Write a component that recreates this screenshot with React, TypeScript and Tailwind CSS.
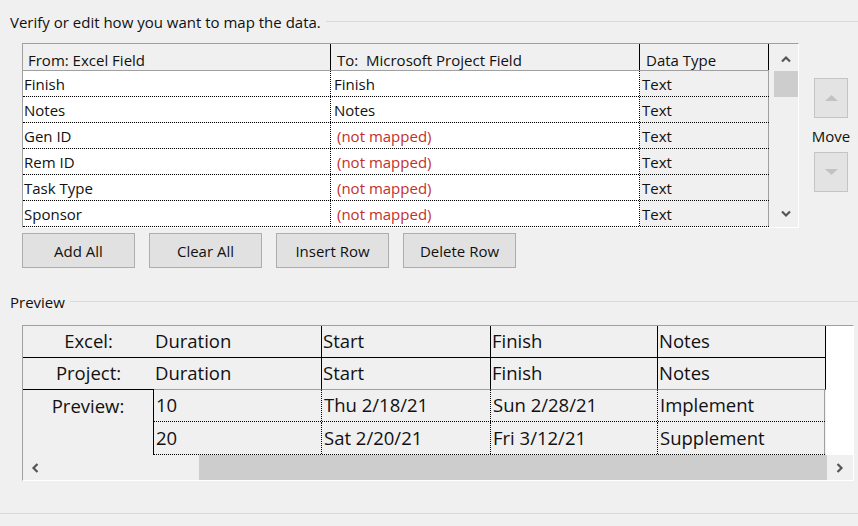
const mapRows = [
  { from: "Finish", to: "Finish" },
  { from: "Notes", to: "Notes" },
  { from: "Gen ID", to: null },
  { from: "Rem ID", to: null },
  { from: "Task Type", to: null },
  { from: "Sponsor", to: null },
];

const previewRows = [
  ["10", "Thu 2/18/21", "Sun 2/28/21", "Implement"],
  ["20", "Sat 2/20/21", "Fri 3/12/21", "Supplement"],
];

const Chevron = ({ dir }: { dir: "up" | "down" | "left" | "right" }) => {
  const pts = {
    up: "1,6.5 5,2.5 9,6.5",
    down: "1,1.5 5,5.5 9,1.5",
    left: "6.5,1 2.5,5 6.5,9",
    right: "1.5,1 5.5,5 1.5,9",
  }[dir];
  const vertical = dir === "up" || dir === "down";
  return (
    <svg
      width={vertical ? 10 : 8}
      height={vertical ? 8 : 10}
      viewBox={vertical ? "0 0 10 8" : "0 0 8 10"}
    >
      <polyline points={pts} fill="none" stroke="#555555" strokeWidth="2.2" />
    </svg>
  );
};

const Triangle = ({ up }: { up?: boolean }) => (
  <svg width="13" height="6" viewBox="0 0 13 6">
    <polygon points={up ? "0,6 6.5,0 13,6" : "0,0 6.5,6 13,0"} fill="#c2c2c2" />
  </svg>
);

const MappingTable = () => (
  <div className="flex w-[777px] h-[185px] border-l border-t border-[#a0a0a0] border-r border-b border-r-white border-b-white">
    <div className="flex flex-col w-[746px]">
      {/* header */}
      <div className="flex h-[27px] border-b border-[#a0a0a0] bg-[#f0f0f0]">
        <div className="w-[308px] border-r border-black pl-[5px] pt-[6px] flex items-center">From: Excel Field</div>
        <div className="w-[309px] border-r border-black pl-[6px] pt-[6px] flex items-center whitespace-pre">To:  Microsoft Project Field</div>
        <div className="w-[129px] border-r border-black pl-[6px] pt-[6px] flex items-center">Data Type</div>
      </div>
      {mapRows.map((r) => (
        <div key={r.from} className="flex h-[26px] border-b border-dotted border-black">
          <div className="w-[308px] bg-white border-r border-dotted border-black pl-[1px] pt-[2px] flex items-center">{r.from}</div>
          <div className="w-[309px] bg-white border-r border-dotted border-black pl-[3px] pt-[2px] flex items-center">
            {r.to ? r.to : <span className="text-[#c4302b] pl-[3px]">(not mapped)</span>}
          </div>
          <div className="w-[129px] bg-[#f0f0f0] border-r border-[#a0a0a0] pl-[2px] pt-[2px] flex items-center">Text</div>
        </div>
      ))}
    </div>
    {/* vertical scrollbar */}
    <div className="flex flex-col w-[29px] bg-[#f0f0f0]">
      <div className="h-[27px] flex items-center justify-center pl-[4px] pt-[2px]">
        <Chevron dir="up" />
      </div>
      <div className="h-[26px] ml-[5px] bg-[#cdcdcd]" />
      <div className="flex-1" />
      <div className="h-[26px] flex items-center justify-center pl-[4px]">
        <Chevron dir="down" />
      </div>
    </div>
  </div>
);

const MoveButtons = () => (
  <div className="flex flex-col ml-[15px] pt-[35px] w-[34px]">
    <div className="h-[40px] bg-[#e3e3e3] border border-[#c4c4c4] flex items-center justify-center">
      <Triangle up />
    </div>
    <div className="h-[34px] pt-[2px] flex items-center justify-center whitespace-nowrap">Move</div>
    <div className="h-[40px] bg-[#e3e3e3] border border-[#c4c4c4] flex items-center justify-center">
      <Triangle />
    </div>
  </div>
);

const PreviewTable = () => (
  <div className="flex flex-col ml-[22px] w-[832px] h-[156px] border-l border-t border-[#a0a0a0] border-r border-b border-r-white border-b-white bg-[#f0f0f0]">
    <div className="flex">
      <div className="flex flex-col w-[803px] text-[18.5px]">
        <div className="flex h-[32px] border-b border-black">
          <div className="w-[131px] flex items-center justify-center">Excel:</div>
          <div className="w-[168px] border-r border-black pl-[1px] flex items-center">Duration</div>
          <div className="w-[169px] border-r border-black pl-[1px] flex items-center">Start</div>
          <div className="w-[167px] border-r border-black pl-[1px] flex items-center">Finish</div>
          <div className="w-[168px] border-r border-black pl-[1px] flex items-center">Notes</div>
        </div>
        <div className="flex h-[32px]">
          <div className="w-[131px] border-b border-black flex items-center justify-center">Project:</div>
          <div className="w-[168px] border-r border-b border-r-black border-b-[#a0a0a0] pl-[1px] flex items-center">Duration</div>
          <div className="w-[169px] border-r border-b border-r-black border-b-[#a0a0a0] pl-[1px] flex items-center">Start</div>
          <div className="w-[167px] border-r border-b border-r-black border-b-[#a0a0a0] pl-[1px] flex items-center">Finish</div>
          <div className="w-[168px] border-r border-b border-r-black border-b-[#a0a0a0] pl-[1px] flex items-center">Notes</div>
        </div>
        <div className="flex h-[65px]">
          <div className="w-[131px] border-r border-black">
            <div className="h-[32px] flex items-center justify-center">Preview:</div>
          </div>
          <div className="flex flex-col">
            {previewRows.map((row, i) => (
              <div key={i} className={`flex border-b border-dotted border-black ${i === 0 ? "h-[32px]" : "h-[33px]"}`}>
                <div className="w-[168px] border-r border-dotted border-black pl-[2px] flex items-center">{row[0]}</div>
                <div className="w-[169px] border-r border-dotted border-black pl-[2px] flex items-center">{row[1]}</div>
                <div className="w-[167px] border-r border-dotted border-black pl-[2px] flex items-center">{row[2]}</div>
                <div className="w-[167px] border-r border-[#a0a0a0] pl-[2px] flex items-center">{row[3]}</div>
              </div>
            ))}
          </div>
        </div>
      </div>
      <div className="flex-1 bg-white" />
    </div>
    {/* horizontal scrollbar */}
    <div className="flex h-[25px]">
      <div className="w-[176px] flex items-center pl-[8px]">
        <Chevron dir="left" />
      </div>
      <div className="w-[628px] bg-[#cdcdcd]" />
      <div className="flex-1 flex items-center justify-center">
        <Chevron dir="right" />
      </div>
    </div>
  </div>
);

export default function App() {
  return (
    <div className="w-[858px] h-[526px] overflow-hidden bg-[#f0f0f0] text-[#111] text-[15px] font-['Open_Sans',sans-serif] leading-none">
      <div className="flex items-center h-[42px] pl-[10px]">
        <span className="pt-[3px]">Verify or edit how you want to map the data.</span>
        <div className="flex-1 h-px bg-[#d9d9d9] ml-[5px]" />
      </div>
      <div className="flex pl-[22px] mt-[1px]">
        <MappingTable />
        <MoveButtons />
      </div>
      <div className="flex gap-[14px] pl-[22px] mt-[5px]">
        {["Add All", "Clear All", "Insert Row", "Delete Row"].map((b) => (
          <div key={b} className="w-[113px] h-[35px] border border-[#adadad] bg-[#e1e1e1] pt-[2px] flex items-center justify-center">
            {b}
          </div>
        ))}
      </div>
      <div className="flex items-center h-[22px] mt-[22px] pl-[10px]">
        <span className="pt-[2px]">Preview</span>
        <div className="flex-1 h-px bg-[#d9d9d9] ml-[5px]" />
      </div>
      <div className="mt-[13px]">
        <PreviewTable />
      </div>
      <div className="mt-[32px] h-px bg-[#d9d9d9]" />
    </div>
  );
}
